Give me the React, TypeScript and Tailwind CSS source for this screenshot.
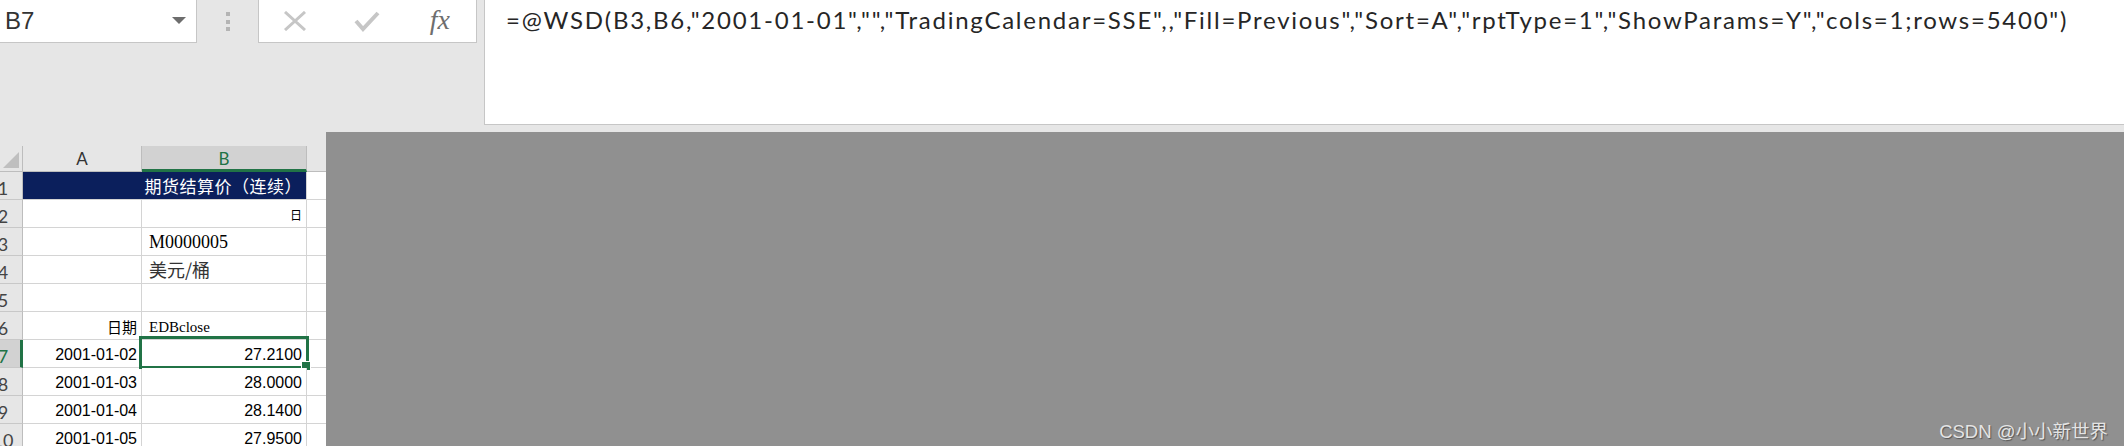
import React from 'react';

const GRID = 'border-r border-b border-[#d4d4d4]';

type RowDef = {
  n: number;
  a?: React.ReactNode;
  b?: React.ReactNode;
  bAlign?: 'left' | 'right';
  navy?: boolean;
  active?: boolean;
};

const rows: RowDef[] = [
  {
    n: 1,
    navy: true,
    b: (
      <span className="text-white text-[17px] leading-[20px] font-['Noto_Sans_CJK_SC',sans-serif] tracking-[0.5px]">
        期货结算价（连续）
      </span>
    ),
    bAlign: 'right',
  },
  {
    n: 2,
    b: <span className="text-[12px] leading-[14px] text-black font-['Noto_Sans_CJK_SC',sans-serif] mb-[2px]">日</span>,
    bAlign: 'right',
  },
  {
    n: 3,
    b: <span className="text-[18px] leading-[20px] text-black font-['Liberation_Serif',serif]">M0000005</span>,
    bAlign: 'left',
  },
  {
    n: 4,
    b: <span className="text-[18px] leading-[22px] text-[#333] font-['Noto_Sans_CJK_SC',sans-serif]">美元/桶</span>,
    bAlign: 'left',
  },
  { n: 5 },
  {
    n: 6,
    a: <span className="text-[15px] leading-[18px] text-black font-['Noto_Sans_CJK_SC',sans-serif]">日期</span>,
    b: <span className="text-[15px] leading-[18px] text-black font-['Liberation_Serif',serif]">EDBclose</span>,
    bAlign: 'left',
  },
  { n: 7, a: '2001-01-02', b: '27.2100', bAlign: 'right', active: true },
  { n: 8, a: '2001-01-03', b: '28.0000', bAlign: 'right' },
  { n: 9, a: '2001-01-04', b: '28.1400', bAlign: 'right' },
  { n: 10, a: '2001-01-05', b: '27.9500', bAlign: 'right' },
];

function NumText({ children }: { children: React.ReactNode }) {
  if (typeof children !== 'string') return <>{children}</>;
  return <span className="text-[16px] leading-[18px] text-black font-['Liberation_Sans',sans-serif]">{children}</span>;
}

function SheetRow({ row }: { row: RowDef }) {
  return (
    <div className="flex h-[28px]">
      <div
        className={
          'w-[23px] shrink-0 overflow-hidden border-b border-[#c8c8c8] ' +
          (row.active ? 'bg-[#d2d2d2] border-r-[3px] border-r-[#217346]' : 'bg-[#e6e6e6] border-r border-r-[#bdbdbd]')
        }
      >
        <div
          className={
            "w-[40px] -ml-[17px] h-full flex items-end justify-center pb-[1px] text-[18px] leading-[20px] font-['Lato',sans-serif] " +
            (row.active ? 'text-[#217346]' : 'text-[#444]')
          }
        >
          {row.n}
        </div>
      </div>
      <div
        className={
          'w-[119px] shrink-0 flex items-end justify-end pr-[4px] pb-[3px] ' +
          (row.navy ? 'bg-[#0b1f5c] border-b border-[#d4d4d4]' : 'bg-white ' + GRID)
        }
      >
        {row.a && <NumText>{row.a}</NumText>}
      </div>
      <div
        className={
          'relative w-[165px] shrink-0 flex items-end pb-[3px] ' +
          (row.bAlign === 'left' ? 'justify-start pl-[7px] ' : 'justify-end pr-[4px] ') +
          (row.navy ? 'bg-[#0b1f5c] border-b border-r border-[#d4d4d4]' : 'bg-white ' + GRID)
        }
      >
        {row.b && <NumText>{row.b}</NumText>}
        {row.active && (
          <>
            <div className="absolute -left-[3px] -top-[4px] w-[170px] h-[33px] border-[3px] border-[#217346]" />
            <div className="absolute right-[-4px] bottom-[-3px] w-[8px] h-[8px] bg-[#217346] outline outline-1 outline-white" />
          </>
        )}
      </div>
      <div className="w-[19px] shrink-0 bg-white border-b border-[#d4d4d4]" />
    </div>
  );
}

export default function App() {
  return (
    <div className="w-[2124px] h-[446px] overflow-hidden bg-[#e6e6e6] flex flex-col">
      {/* formula bar */}
      <div className="flex h-[132px] shrink-0">
        <div className="w-[197px] h-[43px] bg-white border-r border-b border-[#c6c6c6] flex items-center justify-between pl-[5px] pr-[10px]">
          <span className="text-[24px] leading-[28px] text-[#333] font-['Liberation_Sans',sans-serif]">B7</span>
          <svg width="14" height="8" viewBox="0 0 14 8">
            <path d="M0 0 L14 0 L7 7 Z" fill="#6d6d6d" />
          </svg>
        </div>
        <div className="w-[61px] h-[43px] flex flex-col items-center justify-center gap-[3.5px]">
          <div className="w-[4px] h-[4px] bg-[#b4b4b4]" />
          <div className="w-[4px] h-[4px] bg-[#b4b4b4]" />
          <div className="w-[4px] h-[4px] bg-[#b4b4b4]" />
        </div>
        <div className="w-[219px] h-[43px] bg-white border-x border-b border-[#c6c6c6] grid grid-cols-3 items-center">
          <div className="flex justify-center">
            <svg width="24" height="20" viewBox="0 0 24 20">
              <path d="M2 1 L22 19 M22 1 L2 19" stroke="#c6c6c6" strokeWidth="3" fill="none" />
            </svg>
          </div>
          <div className="flex justify-center">
            <svg width="26" height="22" viewBox="0 0 26 22">
              <path d="M2 11 L9 19 L24 3" stroke="#c6c6c6" strokeWidth="4" fill="none" />
            </svg>
          </div>
          <div className="flex justify-center">
            <span className="text-[28px] leading-[30px] italic text-[#6e6e6e] font-['Liberation_Serif',serif] mb-[2px]">fx</span>
          </div>
        </div>
        <div className="ml-[7px] flex-1 h-[125px] bg-white border-l border-b border-[#c6c6c6] pl-[21px] pt-[6px]">
          <span className="text-[24px] leading-[28px] tracking-[1.75px] text-[#262626] font-['Lato',sans-serif] whitespace-nowrap">
            =@WSD(B3,B6,"2001-01-01","","TradingCalendar=SSE",,"Fill=Previous","Sort=A","rptType=1","ShowParams=Y","cols=1;rows=5400")
          </span>
        </div>
      </div>

      {/* sheet + gray area */}
      <div className="flex flex-1">
        <div className="w-[326px] shrink-0 pt-[14px]">
          <div className="flex h-[26px]">
            <div className="w-[23px] shrink-0 bg-[#e6e6e6] border-r border-b border-[#bdbdbd] flex items-end justify-end pb-[3px] pr-[3px]">
              <svg width="16" height="16" viewBox="0 0 16 16">
                <path d="M16 0 L16 16 L0 16 Z" fill="#bfbfbf" />
              </svg>
            </div>
            <div className="w-[119px] shrink-0 bg-[#e6e6e6] border-r border-b border-[#bdbdbd] flex items-center justify-center">
              <span className="text-[17px] leading-[20px] text-[#333] font-['Lato',sans-serif]">A</span>
            </div>
            <div className="w-[165px] shrink-0 bg-[#d2d2d2] border-r border-[#bdbdbd] border-b-[3px] border-b-[#217346] flex items-center justify-center pt-[2px]">
              <span className="text-[17px] leading-[20px] text-[#217346] font-['Lato',sans-serif]">B</span>
            </div>
            <div className="w-[19px] shrink-0 bg-[#e6e6e6] border-b border-[#bdbdbd]" />
          </div>
          {rows.map((r) => (
            <SheetRow key={r.n} row={r} />
          ))}
        </div>
        <div className="relative flex-1 bg-[#909090]">
          <span className="absolute right-[16px] bottom-[9px] text-[18.5px] leading-[22px] text-[#e4e4e4] font-['Liberation_Sans','Noto_Sans_CJK_SC',sans-serif] [text-shadow:1px_1px_1px_#555]">
            CSDN @小小新世界
          </span>
        </div>
      </div>
    </div>
  );
}
